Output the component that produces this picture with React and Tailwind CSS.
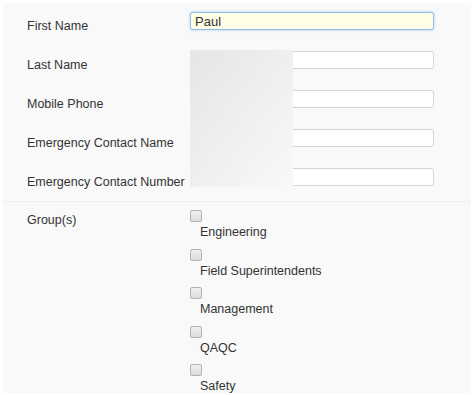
import React from 'react';

const fields = [
  { key: 'first', label: 'First Name', value: 'Paul', focused: true },
  { key: 'last', label: 'Last Name', value: '' },
  { key: 'mobile', label: 'Mobile Phone', value: '' },
  { key: 'ecName', label: 'Emergency Contact Name', value: '' },
  { key: 'ecNumber', label: 'Emergency Contact Number', value: '' },
];

const groups = ['Engineering', 'Field Superintendents', 'Management', 'QAQC', 'Safety'];

const App = () => {
  return (
    <div className="h-[395px] w-[474px] overflow-hidden bg-white pl-[3px] pt-[3px] font-['Liberation_Sans',Arial,sans-serif] text-[12.5px] text-[#333]">
      <div className="relative h-[390px] w-[468px] bg-[#f9f9f9]">
        <div className="border-b border-[#f0f0f0] pt-[3px]">
          {fields.map((f) => (
            <div key={f.key} className="flex h-[39px] items-start">
              <label className="mt-[12px] w-[187px] shrink-0 whitespace-nowrap pl-[24px] leading-4">{f.label}</label>
              <input
                readOnly
                value={f.value}
                className={`mt-[6px] h-[18px] w-[244px] rounded-[3px] border px-[4px] text-[13px] leading-4 text-[#333] outline-none ${
                  f.focused
                    ? 'border-[#8fbde6] bg-[#fffde6] shadow-[0_0_3px_rgba(110,170,230,0.6)]'
                    : 'border-[#d4d4d4] bg-white'
                }`}
              />
            </div>
          ))}
        </div>

        <div className="flex pt-[5px]">
          <div className="mt-[5px] w-[187px] shrink-0 pl-[24px] leading-4">Group(s)</div>
          <div className="mt-[3px] flex flex-col gap-[8.5px]">
            {groups.map((g) => (
              <label key={g} className="block">
                <span className="block h-[12px] w-[12px] rounded-[2px] border border-[#b3b3b3] bg-gradient-to-b from-[#f0f0f0] to-[#dcdcdc]" />
                <span className="mt-[2px] block pl-[10px] leading-4">{g}</span>
              </label>
            ))}
          </div>
        </div>

        {/* redacted area */}
        <div className="absolute left-[187px] top-[47px] h-[137px] w-[103px] overflow-hidden">
          <div className="absolute -inset-[10px] bg-gradient-to-br from-[#e4e4e4] via-[#efefef] to-[#fafafa] blur-[6px]" />
        </div>
      </div>
    </div>
  );
};

export default App;
